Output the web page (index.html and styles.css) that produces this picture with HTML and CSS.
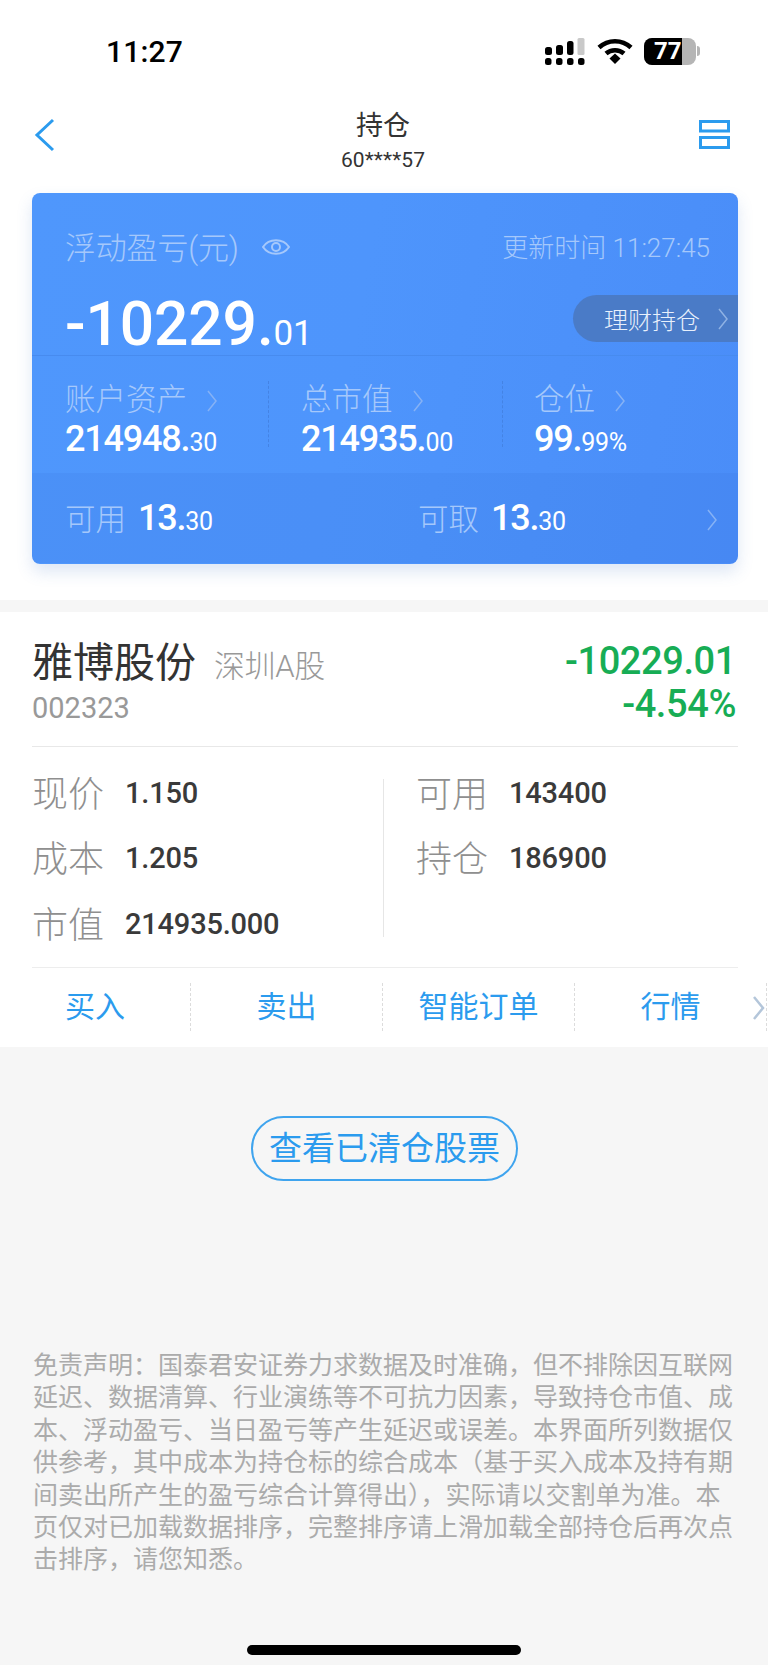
FILE: index.html
```html
<!DOCTYPE html>
<html lang="zh-CN">
<head>
<meta charset="utf-8">
<title>持仓</title>
<link rel="stylesheet" href="styles.css">
</head>
<body>
<div class="phone">
  <header class="top">
    <div class="status">
      <span class="clock">11:27</span>
      <div class="status-icons">
        <svg class="sig" width="41" height="27" viewBox="0 0 41 27"><g fill="#000"><rect x="0" y="9" width="7" height="8" rx="2.5"/><rect x="11" y="7" width="7" height="10" rx="2.5"/><rect x="22" y="3" width="6.500" height="14" rx="2.500"/><rect x="32.500" y="0" width="7" height="17" rx="1.500" fill="#c9c9c9"/><rect x="0" y="20" width="6.500" height="7" rx="2.500"/><rect x="11" y="20" width="6.500" height="7" rx="2.500"/><rect x="22" y="20" width="6.500" height="7" rx="2.500"/><rect x="33" y="20" width="6.500" height="7" rx="2.500"/></g></svg>
        <svg class="wifi" width="36" height="26" viewBox="0 0 36 26"><g fill="none" stroke="#000" stroke-width="4.500"><path d="M2 9.500C11 1 25 1 34 9.500"/><path d="M9 15.500C14 11 22 11 27 15.500"/></g><path d="M12.500 20.500L18 15.500L23.500 20.500L18 26Z" fill="#000"/></svg>
        <div class="batt"><div class="batt-body"><span class="batt-fill"></span><span class="batt-num">77</span></div><span class="batt-cap"></span></div>
      </div>
    </div>
    <nav class="nav">
      <svg class="back" width="22" height="34" viewBox="0 0 22 34"><path d="M19 2L3 17L19 32" fill="none" stroke="#2b9bee" stroke-width="3"/></svg>
      <div class="nav-title">
        <div class="title">持仓</div>
        <div class="acct">60****57</div>
      </div>
      <svg class="menu" width="31" height="29" viewBox="0 0 31 29"><g fill="none" stroke="#2b9bee" stroke-width="3"><rect x="1.500" y="1.500" width="28" height="9.500"/><rect x="1.500" y="17.500" width="28" height="10"/></g></svg>
    </nav>
    <section class="card">
      <div class="card-head">
        <div class="pl-row">
          <span class="muted pl-label">浮动盈亏(元)</span>
          <svg class="eye" width="30" height="20" viewBox="0 0 30 20"><g fill="none" stroke="#a5c8fb" stroke-width="2"><path d="M2 10C8 1 22 1 28 10C22 19 8 19 2 10Z"/><circle cx="15" cy="10" r="4"/></g></svg>
          <span class="muted upd">更新时间 11:27:45</span>
        </div>
        <div class="big-row">
          <span class="big">-10229.<small>01</small></span>
          <div class="pill"><span>理财持仓</span><svg width="10" height="24" viewBox="0 0 10 24"><path d="M1 2L9 12L1 22" fill="none" stroke="#8fb2e4" stroke-width="1.500"/></svg></div>
        </div>
      </div>
      <div class="metrics">
        <div class="metric m1">
          <div class="muted mlabel">账户资产<svg class="chev" width="10" height="24" viewBox="0 0 10 24"><path d="M1 2L9 12L1 22" fill="none" stroke="#86b2f5" stroke-width="1.500"/></svg></div>
          <div class="mval">214948.<small>30</small></div>
        </div>
        <div class="metric m2">
          <div class="muted mlabel">总市值<svg class="chev" width="10" height="24" viewBox="0 0 10 24"><path d="M1 2L9 12L1 22" fill="none" stroke="#86b2f5" stroke-width="1.500"/></svg></div>
          <div class="mval">214935.<small>00</small></div>
        </div>
        <div class="metric m3">
          <div class="muted mlabel">仓位<svg class="chev" width="10" height="24" viewBox="0 0 10 24"><path d="M1 2L9 12L1 22" fill="none" stroke="#86b2f5" stroke-width="1.500"/></svg></div>
          <div class="mval">99.<small>99%</small></div>
        </div>
      </div>
      <div class="band">
        <div class="avail a1"><span class="muted mlabel">可用</span><span class="mval">13.<small>30</small></span></div>
        <div class="avail a2"><span class="muted mlabel">可取</span><span class="mval">13.<small>30</small></span></div>
        <svg width="10" height="24" viewBox="0 0 10 24"><path d="M1 2L9 12L1 22" fill="none" stroke="#86b2f5" stroke-width="1.500"/></svg>
      </div>
    </section>
  </header>

  <section class="stock">
    <div class="stock-head">
      <div>
        <div class="name-row"><span class="name">雅博股份</span><span class="market">深圳A股</span></div>
        <div class="code">002323</div>
      </div>
      <div class="pl">
        <div>-10229.01</div>
        <div>-4.54%</div>
      </div>
    </div>
    <div class="detail">
      <div class="col col-l">
        <div class="kv"><span class="k">现价</span><span class="v">1.150</span></div>
        <div class="kv"><span class="k">成本</span><span class="v">1.205</span></div>
        <div class="kv"><span class="k">市值</span><span class="v">214935.000</span></div>
      </div>
      <div class="col col-r">
        <div class="kv"><span class="k">可用</span><span class="v">143400</span></div>
        <div class="kv"><span class="k">持仓</span><span class="v">186900</span></div>
      </div>
    </div>
    <div class="actions">
      <div class="act">买入</div>
      <div class="act">卖出</div>
      <div class="act">智能订单</div>
      <div class="act">行情</div>
      <svg class="act-chev" width="13" height="26" viewBox="0 0 13 26"><path d="M2 2L11 13L2 24" fill="none" stroke="#b4c6da" stroke-width="2.500"/></svg>
    </div>
  </section>

  <div class="cleared"><span class="cleared-btn">查看已清仓股票</span></div>

  <p class="disclaimer">免责声明：国泰君安证券力求数据及时准确，但不排除因互联网<br>延迟、数据清算、行业演练等不可抗力因素，导致持仓市值、成<br>本、浮动盈亏、当日盈亏等产生延迟或误差。本界面所列数据仅<br>供参考，其中成本为持仓标的综合成本（基于买入成本及持有期<br>间卖出所产生的盈亏综合计算得出），实际请以交割单为准。本<br>页仅对已加载数据排序，完整排序请上滑加载全部持仓后再次点<br>击排序，请您知悉。</p>

  <div class="home-bar"></div>
</div>
</body>
</html>
```

FILE: styles.css
```css
* { box-sizing: border-box; }
html, body { margin: 0; padding: 0; }
body {
  background: #f6f6f6;
  font-family: Roboto, "Noto Sans CJK SC", sans-serif;
}
.phone {
  position: relative;
  width: 768px;
  height: 1665px;
  overflow: hidden;
  background: #f6f6f6;
}
small { font-size: inherit; }

/* top */
.top {
  background: #fff;
  height: 600px;
  padding-top: 31px;
}
.status {
  display: flex;
  justify-content: space-between;
  align-items: center;
  height: 40px;
  padding: 0 68px 0 106px;
}
.clock {
  font-size: 30px;
  font-weight: 500;
  color: #000;
  letter-spacing: .2px;
}
.status-icons { display: flex; align-items: center; gap: 11px; }
.batt { display: flex; align-items: center; gap: 1px; }
.batt-body {
  position: relative;
  width: 52px;
  height: 27px;
  border-radius: 8px;
  background: #b5b5b5;
  overflow: hidden;
  text-align: center;
}
.batt-fill { position: absolute; left: 0; top: 0; bottom: 0; width: 38px; background: #000; }
.batt-num {
  position: absolute;
  left: 10px;
  top: 0;
  font-size: 24px;
  line-height: 27px;
  font-weight: 700;
  color: #fff;
}
.batt-cap { width: 3px; height: 10px; background: #b5b5b5; border-radius: 0 3px 3px 0; }

.nav {
  display: flex;
  justify-content: space-between;
  align-items: flex-start;
  height: 73px;
  margin-top: 33px;
  padding: 0 38px 0 34px;
}
.back { margin-top: 14px; }
.menu { margin-top: 16px; }
.nav-title { text-align: center; color: #333; margin: 3px 0 0 11px; }
.title { font-size: 27px; line-height: 38px; }
.acct { font-size: 21px; line-height: 24px; margin-top: 3px; letter-spacing: .1px; }

/* card */
.card {
  margin: 16px 30px 0 32px;
  height: 371px;
  border-radius: 8px;
  overflow: hidden;
  color: #fff;
  background: linear-gradient(100deg, #4f97fc 0%, #4e95fc 45%, #4a8df8 100%);
  box-shadow: 0 8px 16px rgba(70, 120, 200, .18);
}
.muted { color: #a5c8fb; }
.card-head {
  height: 163px;
  padding: 34px 0 0 33px;
  border-bottom: 1px solid #478bef;
}
.pl-row { display: flex; align-items: center; height: 36px; padding-right: 28px; }
.pl-label { font-size: 31px; font-weight: 300; letter-spacing: -.2px; }
.eye { margin: 4px 0 0 22px; }
.upd { margin-left: auto; font-size: 26px; font-weight: 300; padding-top: 1px; }
.big-row { display: flex; justify-content: space-between; align-items: flex-start; margin-top: 24px; }
.big { font-size: 60.500px; line-height: 56px; font-weight: 500; letter-spacing: -.1px; margin-top: 10px; }
.big small { font-size: 35px; font-weight: 400; letter-spacing: -.3px; }
.pill {
  display: flex;
  align-items: center;
  justify-content: space-between;
  width: 165px;
  height: 47px;
  margin-top: 8px;
  padding: 0 10px 0 31px;
  border-radius: 24px 0 0 24px;
  background: #4a7bc7;
  font-size: 24px;
  font-weight: 300;
  color: #e8f0fc;
}
.metrics {
  display: flex;
  height: 117px;
  padding-top: 25px;
}
.metric { height: 66px; }
.m1 { width: 236px; padding-left: 33px; }
.m2 { width: 234px; padding-left: 32px; border-left: 1px dashed #4483e4; }
.m3 { flex: 1; padding-left: 31px; border-left: 1px dashed #4483e4; }
.metric .mlabel { margin-top: 2px; }
.metric .mval { margin-top: 1px; }
.mlabel { font-size: 30.500px; line-height: 34px; font-weight: 300; }
.chev { margin-left: 20px; vertical-align: -3px; }
.mval { font-size: 36px; line-height: 42px; font-weight: 500; letter-spacing: -1.200px; }
.mval small { font-size: 25px; font-weight: 400; letter-spacing: -.3px; }
.band {
  display: flex;
  align-items: center;
  height: 90px;
  padding: 4px 0 0 33px;
  background: rgba(50, 110, 215, .12);
}
.avail { display: flex; align-items: baseline; gap: 12px; }
.a1 { width: 353px; }
.a2 { width: 289px; }

/* stock */
.stock {
  margin-top: 12px;
  height: 435px;
  background: #fff;
  padding: 0 30px 0 32px;
}
.stock-head {
  display: flex;
  justify-content: space-between;
  height: 135px;
  padding-top: 28px;
  border-bottom: 1px solid #e8e8e8;
}
.name-row { display: flex; align-items: baseline; gap: 18px; }
.name { font-size: 41px; line-height: 46px; color: #333; }
.market { font-size: 31px; color: #999; font-weight: 300; letter-spacing: -.4px; }
.code { font-size: 29px; line-height: 34px; margin-top: 5px; color: #999; }
.pl { text-align: right; font-size: 38px; line-height: 43px; font-weight: 500; color: #17ad55; letter-spacing: -.4px; margin-top: 0; padding-right: 2px; }
.detail {
  display: flex;
  height: 221px;
  padding-top: 11px;
  border-bottom: 1px solid #ededed;
}
.col { height: 158px; margin-top: 21px; }
.col-l { width: 352px; border-right: 1px solid #e6e6e6; }
.col-r { padding-left: 32px; }
.kv { display: flex; align-items: center; height: 65.500px; margin-top: -21px; margin-bottom: 21px; }
.k { width: 93px; font-size: 36px; font-weight: 300; color: #8f8f8f; }
.v { font-size: 29px; font-weight: 500; color: #3a3a3a; letter-spacing: -.2px; padding-top: 4px; }
.actions { position: relative; display: flex; height: 78px; align-items: center; margin: 0 -30px 0 -32px; }
.act {
  width: 192px;
  height: 48px;
  line-height: 48px;
  border-right: 1px dashed #dcdcdc;
  text-align: center;
  font-size: 30px;
  font-weight: 400;
  color: #2b9bee;
}
.act:first-child { width: 191px; }
.act-chev { position: absolute; left: 752px; top: 27px; }

/* button */
.cleared { display: flex; justify-content: center; padding: 69px 0 0 1px; }
.cleared-btn {
  width: 267px;
  height: 65px;
  line-height: 62px;
  border: 2px solid #3fa4ee;
  border-radius: 33px;
  text-align: center;
  font-size: 33px;
  font-weight: 400;
  color: #2b9bee;
}

/* disclaimer */
.disclaimer {
  margin: 169px 0 0 33px;
  font-size: 25px;
  line-height: 32.400px;
  font-weight: 400;
  color: #ababab;
  white-space: nowrap;
}
.home-bar {
  position: absolute;
  left: 247px;
  top: 1645px;
  width: 274px;
  height: 10px;
  border-radius: 5px;
  background: #000;
}
```
